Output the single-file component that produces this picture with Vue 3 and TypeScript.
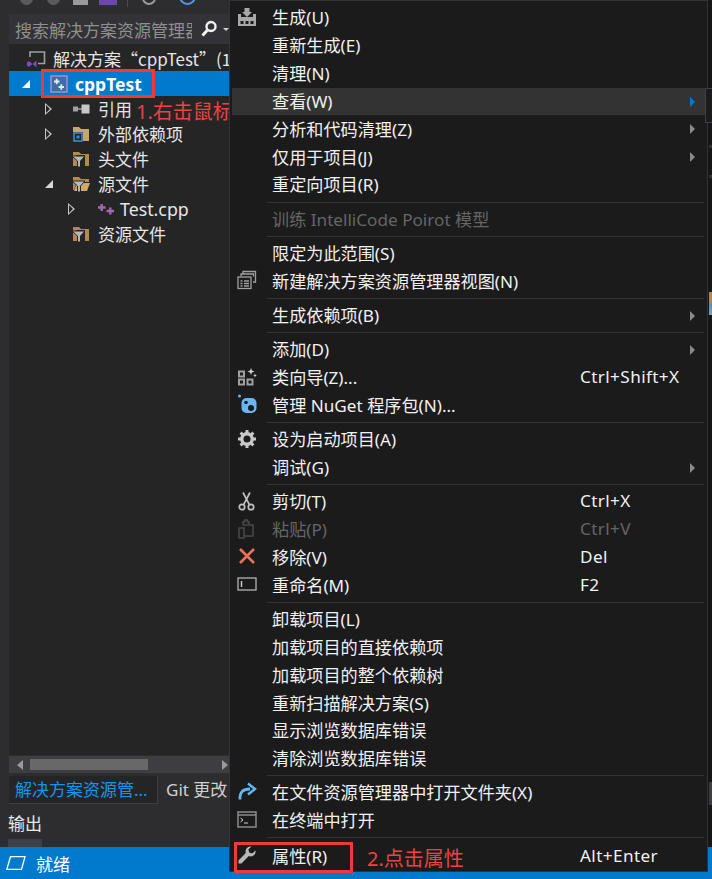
<script setup lang="ts">
interface Row {
  kind: 'item' | 'sep'
  label?: string
  key?: string
  icon?: string
  sub?: boolean
  dim?: boolean
  hover?: boolean
}
const s = (): Row => ({ kind: 'sep' })
const i = (label: string, o: Partial<Row> = {}): Row => ({ kind: 'item', label, ...o })
const rows: Row[] = [
  i('生成(U)', { icon: 'build' }), i('重新生成(E)'), i('清理(N)'),
  i('查看(W)', { sub: true, hover: true }),
  i('分析和代码清理(Z)', { sub: true }), i('仅用于项目(J)', { sub: true }), i('重定向项目(R)'),
  s(), i('训练 IntelliCode Poirot 模型', { dim: true }), s(),
  i('限定为此范围(S)'), i('新建解决方案资源管理器视图(N)', { icon: 'views' }), s(),
  i('生成依赖项(B)', { sub: true }), s(),
  i('添加(D)', { sub: true }), i('类向导(Z)...', { icon: 'wizard', key: 'Ctrl+Shift+X' }), i('管理 NuGet 程序包(N)...', { icon: 'nuget' }), s(),
  i('设为启动项目(A)', { icon: 'gear' }), i('调试(G)', { sub: true }), s(),
  i('剪切(T)', { icon: 'cut', key: 'Ctrl+X' }), i('粘贴(P)', { icon: 'paste', key: 'Ctrl+V', dim: true }),
  i('移除(V)', { icon: 'remove', key: 'Del' }), i('重命名(M)', { icon: 'rename', key: 'F2' }), s(),
  i('卸载项目(L)'), i('加载项目的直接依赖项'), i('加载项目的整个依赖树'), i('重新扫描解决方案(S)'), i('显示浏览数据库错误'), i('清除浏览数据库错误'), s(),
  i('在文件资源管理器中打开文件夹(X)', { icon: 'open' }), i('在终端中打开', { icon: 'term' }), s(),
  i('属性(R)', { icon: 'wrench', key: 'Alt+Enter' }),
]
</script>

<template>
  <div class="app">
    <div class="workspace">
      <aside class="left">
        <div class="toolbar">
          <span class="tool-dot"></span><span class="tool-dot second"></span><span class="tool-home"></span>
          <span class="tool-vs"></span><span class="tool-div"></span><span class="tool-ring"></span><span class="tool-refresh"></span>
        </div>
        <div class="search">
          <span class="search-text">搜索解决方案资源管理器</span>
          <svg class="search-icon" width="18" height="18" viewBox="0 0 18 18"><circle cx="11" cy="6.500" r="4.500" fill="none" stroke="#f1f1f1" stroke-width="2.400"/><path d="M7.500 10 2.500 15.500" stroke="#f1f1f1" stroke-width="3"/></svg>
          <span class="search-drop"></span>
        </div>
        <div class="tree">
          <div class="node d0">
            <svg width="19" height="18" viewBox="0 0 19 18"><path d="M3 7V2h14.500v11.500H11" fill="none" stroke="#a0a0a0" stroke-width="1.600"/><path d="M0 12.500 2 11l3.500 3L9.500 10.500v7L5.500 14 2 17l-2-1.500z" fill="#7a4fb5"/></svg>
            <span class="clip sol">解决方案“cppTest”(1</span>
          </div>
          <div class="node selected d1">
            <span class="arrow open white"></span>
            <svg class="proj" width="18" height="18" viewBox="0 0 18 18"><rect x="1" y="1" width="16" height="16" fill="#3a6ea8" stroke="#b48cd0" stroke-width="1.400"/><path d="M4 6.500h5.500M6.700 3.800v5.400M8.500 12h5.500M11.300 9.300v5.400" stroke="#e8e8f4" stroke-width="1.800"/></svg>
            <b class="proj-name">cppTest</b>
          </div>
          <div class="node d2">
            <span class="arrow closed"></span>
            <svg width="18" height="18" viewBox="0 0 18 18"><rect x="1" y="6.500" width="5" height="5" fill="#a0a0a0"/><path d="M6 9h4" stroke="#a0a0a0" stroke-width="1.500"/><rect x="9.500" y="4.500" width="8" height="9" fill="#c8c8c8"/></svg>
            <span>引用</span>
          </div>
          <div class="node d2">
            <span class="arrow closed"></span>
            <svg width="18" height="18" viewBox="0 0 18 18"><path d="M1 2h6l2 2h8v12H1z" fill="#c9a566"/><rect x="1" y="7" width="10" height="10" fill="#252526"/><rect x="2" y="8" width="8" height="8" fill="none" stroke="#2d8fd0" stroke-width="1.600"/><rect x="4.500" y="10.500" width="3" height="3" fill="#2d8fd0"/></svg>
            <span>外部依赖项</span>
          </div>
          <div class="node d2 noarrow">
            <svg width="18" height="18" viewBox="0 0 18 18"><path d="M1 2h6l2 2h8v12H1z" fill="#b28b4a"/><path d="M4 5h9v11H9" fill="#252526"/><path d="M0 6h13L8.500 11v6h-3v-6z" fill="#b8b8b8" stroke="#252526"/></svg>
            <span>头文件</span>
          </div>
          <div class="node d2 opened">
            <span class="arrow open"></span>
            <svg width="18" height="18" viewBox="0 0 18 18"><path d="M1 2h6l2 2h8v3H5L2 15H1z" fill="#b28b4a"/><path d="M5 8h13l-3 8H2z" fill="#d0aa68"/><path d="M0 6h13L8.500 11v6h-3v-6z" fill="#b8b8b8" stroke="#252526"/></svg>
            <span>源文件</span>
          </div>
          <div class="node d3">
            <span class="arrow closed"></span>
            <svg width="18" height="18" viewBox="0 0 18 18"><path d="M1 7.500h7.500M4.700 4v7M9.500 11H17M13.300 7.500v7" stroke="#a468b0" stroke-width="2.400"/></svg>
            <span class="file-name">Test.cpp</span>
          </div>
          <div class="node d2 noarrow">
            <svg width="18" height="18" viewBox="0 0 18 18"><path d="M1 2h6l2 2h8v12H1z" fill="#b28b4a"/><path d="M4 5h9v11H9" fill="#252526"/><path d="M0 6h13L8.500 11v6h-3v-6z" fill="#b8b8b8" stroke="#252526"/></svg>
            <span>资源文件</span>
          </div>
          <div class="mark-one"></div>
          <span class="note-one">1.右击鼠标</span>
        </div>
        <div class="hscroll">
          <span class="hs-left"></span><span class="hs-thumb"></span><span class="hs-right"></span>
        </div>
        <div class="tabs">
          <span class="tab active">解决方案资源管...</span>
          <span class="tab">Git 更改</span>
        </div>
        <div class="output">输出</div>
        <div class="output-stub"></div>
      </aside>
      <div class="behind"><span class="band b1"></span><span class="band b2"></span><span class="band b3"></span><span class="band b4"></span></div>
    </div>
    <footer class="status">
      <svg width="20" height="14" viewBox="0 0 20 14"><path d="M4.500.7H19L15.500 13.300H.8z" fill="none" stroke="#fff" stroke-width="1.300"/></svg>
      <span>就绪</span>
    </footer>

    <nav class="menu">
      <template v-for="(r, n) in rows" :key="n">
        <div v-if="r.kind === 'sep'" class="sep"></div>
        <div v-else class="item" :class="{ hover: r.hover, dim: r.dim, final: r.icon === 'wrench' }">
          <span class="ic">
            <svg v-if="r.icon === 'build'" viewBox="0 0 20 20" fill="#a8a8a8"><path d="M1 10h18v9H1z"/><path d="M1 7h3v3H1zM16 7h3v3h-3z"/><path d="M7.500 1h5v4H15l-5 5-5-5h2.500z"/><path d="M3.500 14h3v3h-3zM8.500 14h3v3h-3zM13.500 14h3v3h-3z" fill="#1b1b1c"/></svg>
            <svg v-else-if="r.icon === 'views'" viewBox="0 0 20 20" fill="none" stroke="#a0a0a0" stroke-width="1.300"><path d="M6 4V1.500h12.500V12H16"/><path d="M4 6.500V4h12.500v2.500"/><rect x="1" y="7" width="13" height="11.500" fill="#1b1b1c"/><path d="M3.500 11h2M7 11h5M3.500 13.500h2M7 13.500h5M3.500 16h2M7 16h5"/></svg>
            <svg v-else-if="r.icon === 'wizard'" viewBox="0 0 20 20"><rect x="1" y="3.500" width="7" height="7" fill="#a0a0a0"/><rect x="1" y="11.500" width="7" height="7" fill="#a0a0a0"/><rect x="9.500" y="11.500" width="7" height="7" fill="#a0a0a0"/><path d="M3 5.500h3v3H3zM3 13.500h3v3H3zM11.500 13.500h3v3h-3z" fill="#1b1b1c"/><path d="M14 1l1 2.500 2.500 1-2.500 1L14 8l-1-2.500-2.500-1 2.500-1zM18 6.500l.6 1.400 1.400.6-1.400.6L18 10.500l-.6-1.400-1.400-.6 1.400-.6z" fill="#d0d0d0"/></svg>
            <svg v-else-if="r.icon === 'nuget'" viewBox="0 0 20 20"><circle cx="2.500" cy="2" r="1.500" fill="#67b7f5"/><rect x="4.500" y="4" width="15" height="15" rx="5" fill="#67b7f5"/><circle cx="9" cy="8.500" r="1.800" fill="#1b1b1c"/><circle cx="14" cy="14" r="3" fill="#1b1b1c"/></svg>
            <svg v-else-if="r.icon === 'gear'" viewBox="0 0 20 20"><circle cx="10" cy="10" r="5.200" fill="none" stroke="#c8c8c8" stroke-width="3.400"/><path d="M10 1v3M10 16v3M1 10h3M16 10h3M3.600 3.600l2.100 2.100M14.300 14.300l2.100 2.100M3.600 16.400l2.100-2.100M14.300 5.700l2.100-2.100" stroke="#c8c8c8" stroke-width="3"/></svg>
            <svg v-else-if="r.icon === 'cut'" viewBox="0 0 20 20" fill="none" stroke="#c0c0c0" stroke-width="1.700"><circle cx="5" cy="16" r="2.700"/><circle cx="14" cy="16" r="2.700"/><path d="M6.500 13.800 13 1.500M12.500 13.800 6 1.500"/></svg>
            <svg v-else-if="r.icon === 'paste'" viewBox="0 0 20 20" fill="none" stroke="#4a4a4a" stroke-width="1.500"><path d="M2 9h5v10H2zM7 17h9V6h-3"/><path d="M6 6V3h1.500V1h3v2H12v3z"/></svg>
            <svg v-else-if="r.icon === 'remove'" viewBox="0 0 20 20"><path d="M3 3l14 14M17 3 3 17" stroke="#e8735a" stroke-width="2.600"/></svg>
            <svg v-else-if="r.icon === 'rename'" viewBox="0 0 20 20" fill="none" stroke="#a8a8a8" stroke-width="1.400"><rect x="1" y="4" width="18" height="12"/><path d="M4.500 7v6" stroke="#d0d0d0"/></svg>
            <svg v-else-if="r.icon === 'open'" viewBox="0 0 20 20" fill="none"><path d="M3 17.500C2.500 10 6 7 13 7" stroke="#67b7f5" stroke-width="2.800"/><path d="M11 1.500 18 7l-7 5.500" stroke="#67b7f5" stroke-width="2.400"/></svg>
            <svg v-else-if="r.icon === 'term'" viewBox="0 0 20 20" fill="none" stroke="#8c8c8c" stroke-width="1.500"><rect x="1" y="2" width="18" height="15"/><path d="M1 5h18"/><path d="M3.500 8l2.500 2-2.500 2M7 13h4" stroke="#d0d0d0" stroke-width="1"/></svg>
            <svg v-else-if="r.icon === 'wrench'" viewBox="0 0 20 20"><path d="M13.500 1.500a5 5 0 0 0-4.700 6.600L1.500 15.400v3h3l7.300-7.300A5 5 0 0 0 18.500 5.500l-3.300 3-3-.9-.8-3 3-3z" fill="#b8b8b8"/></svg>
          </span>
          <span class="label">{{ r.label }}</span>
          <span v-if="r.key" class="shortcut">{{ r.key }}</span>
          <span v-if="r.sub" class="chev"></span>
        </div>
      </template>
      <div class="mark-two"></div>
      <span class="note-two">2.点击属性</span>
    </nav>
    <div class="submenu-peek"></div>
  </div>
</template>

<style scoped>
.app {
  position: relative;
  width: 712px;
  height: 879px;
  overflow: hidden;
  display: flex;
  flex-direction: column;
  background: #2d2d30;
  color: #f1f1f1;
  font-family: "Noto Sans", "Noto Sans CJK SC", sans-serif;
  font-size: 17px;
}
.workspace { flex: 1; display: flex; min-height: 0; }
.left { width: 229px; flex: none; display: flex; flex-direction: column; padding-left: 9px; box-sizing: border-box; }
.toolbar { height: 14px; flex: none; display: flex; align-items: flex-end; padding: 0 0 9px 11px; box-sizing: border-box; overflow: hidden; }
.toolbar span { flex: none; display: block; }
.tool-dot { width: 13px; height: 13px; border-radius: 50%; background: #5a5a5c; }
.tool-dot.second { margin-left: 14px; }
.tool-home { margin-left: 13px; width: 15px; height: 14px; background: #9a9a9a; }
.tool-vs { margin-left: 11px; width: 18px; height: 14px; background: #6d49a6; }
.tool-div { margin-left: 10px; width: 1px; height: 14px; background: #4a4a4c; margin-bottom: -2px; }
.tool-ring { margin-left: 14px; width: 10px; height: 10px; border: 2px solid #9a9a9a; border-radius: 50%; }
.tool-refresh { margin-left: 23px; width: 13px; height: 13px; border: 2px solid #4c9be0; border-radius: 50%; }
.search { height: 30px; flex: none; background: #333337; display: flex; align-items: center; padding-left: 6px; position: relative; color: #8f8f8f; overflow: hidden; }
.search-text { width: 177px; flex: none; white-space: nowrap; overflow: hidden; }
.search-icon { margin-left: 8px; flex: none; }
.search-drop { flex: none; width: 0; height: 0; margin-left: 5px; border-left: 3px solid transparent; border-right: 3px solid transparent; border-top: 3px solid #d0d0d0; }
.tree { flex: 1; background: #252526; padding-top: 2px; position: relative; overflow: hidden; min-height: 0; }
.node { height: 25px; display: flex; align-items: center; white-space: nowrap; gap: 8px; position: relative; color: #e6e6e6; }
.node svg { flex: none; }
.node.d0 { padding-left: 18px; gap: 7px; }
.node.d1 { padding-left: 13px; gap: 20px; }
.node.d2 { padding-left: 36px; }
.node.d2.noarrow { padding-left: 63px; }
.node.d2 .arrow { margin-right: 12px; }
.node.d2.opened .arrow { margin-right: 11px; }
.node.d3 { padding-left: 59px; gap: 5px; }
.node.d3 .arrow { margin-right: 17px; }
.file-name { font-size: 17.800px; }
.clip { overflow: hidden; }
.sol { font-family: "Noto Sans CJK SC", sans-serif; }
.selected { background: #007acc; color: #fff; }
.proj-name { font-weight: 700; font-size: 17.500px; margin-left: -13px; color: #fff; }
.arrow { display: block; flex: none; width: 0; height: 0; }
.arrow.closed { border-left: 7px solid #c8c8c8; border-top: 6px solid transparent; border-bottom: 6px solid transparent; position: relative; }
.arrow.closed::after { content: ""; position: absolute; left: -6px; top: -4px; border-left: 4px solid #252526; border-top: 4px solid transparent; border-bottom: 4px solid transparent; }
.arrow.open { border-right: 8px solid #d8d8d8; border-top: 8px solid transparent; }
.arrow.white { border-right-color: #fff; }
.mark-one { position: absolute; left: 32px; top: 25px; width: 114px; height: 29px; box-sizing: border-box; border: 3px solid #f03a3a; }
.note-one { position: absolute; left: 127px; top: 52px; color: #f04040; font-size: 20px; white-space: nowrap; }
.hscroll { height: 17px; margin-top: 1px; flex: none; background: #3e3e42; display: flex; align-items: center; padding-left: 13px; position: relative; }
.hscroll span { display: block; flex: none; }
.hs-left { width: 0; height: 0; border-right: 6px solid #9a9a9a; border-top: 5px solid transparent; border-bottom: 5px solid transparent; margin-right: 7px; margin-left: -5px; }
.hs-thumb { width: 118px; height: 11px; background: #686868; }
.hs-right { width: 0; height: 0; border-left: 6px solid #9a9a9a; border-top: 5px solid transparent; border-bottom: 5px solid transparent; margin-left: 74px; }
.tabs { height: 28px; margin-top: 3px; flex: none; display: flex; align-items: center; white-space: nowrap; overflow: hidden; }
.tab { height: 28px; line-height: 27px; padding: 0 8px 0 6px; box-sizing: border-box; color: #d0d0d0; flex: none; }
.tab.active { width: 149px; background: #252526; color: #0e97f1; margin-right: 2px; border-bottom: 1px solid #3f3f46; border-right: 1px solid #3f3f46; }
.output { margin: 7px 0 0 -1px; height: 28px; line-height: 26px; color: #e8e8e8; flex: none; }
.output-stub { margin-left: -1px; width: 34px; height: 8px; background: #3f3f46; flex: none; }
.behind { flex: 1; background: #161616; display: flex; flex-direction: column; align-items: flex-end; }
.band { display: block; width: 3px; flex: none; background: #333337; }
.b1 { margin-top: 145px; height: 3px; }
.b2 { margin-top: 27px; height: 3px; }
.b3 { margin-top: 114px; height: 23px; background: linear-gradient(#b08850, #b08850 45%, #4a90c8 55%, #8aa0b0); }
.b4 { margin-top: 467px; height: 23px; background: #3e3e42; }
.status { height: 32px; flex: none; background: #007acc; display: flex; align-items: center; gap: 10px; padding-left: 6px; color: #fff; }
.submenu-peek { position: absolute; left: 705px; top: 88px; width: 7px; height: 35px; box-sizing: border-box; background: #1b1b1c; border: 1px solid #3f3f46; border-right: 0; z-index: 3; }
.menu {
  position: absolute;
  left: 229px;
  top: 0;
  width: 479px;
  height: 872px;
  box-sizing: border-box;
  padding: 3px 0 0 2px;
  background: #1b1b1c;
  border: 1px solid #333337;
  white-space: nowrap;
  z-index: 2;
  font-size: 17.150px;
}
.item { height: 27.850px; box-sizing: border-box; padding-bottom: 2px; display: flex; align-items: center; position: relative; }
.item.final { margin-top: 1px; }
.item.hover { background: #333334; }
.item.dim { color: #656565; }
.ic { width: 40px; flex: none; display: flex; align-items: center; }
.ic svg { display: block; width: 20px; height: 20px; margin-left: 5px; }
.shortcut { position: absolute; left: 348px; letter-spacing: .4px; }
.chev { position: absolute; right: 12px; top: 9px; width: 0; height: 0; border-left: 5px solid #8a8a8a; border-top: 5px solid transparent; border-bottom: 5px solid transparent; }
.item.hover .chev { border-left-color: #007acc; }
.sep { height: 6.400px; display: flex; align-items: center; margin-left: 35px; margin-right: 3px; }
.sep::before { content: ""; display: block; width: 100%; height: 1px; background: #333337; }
.mark-two { position: absolute; left: 4px; top: 841px; width: 119px; height: 31px; box-sizing: border-box; border: 3px solid #f03a3a; }
.note-two { position: absolute; left: 137px; top: 842px; color: #f04040; font-size: 20px; }
</style>
